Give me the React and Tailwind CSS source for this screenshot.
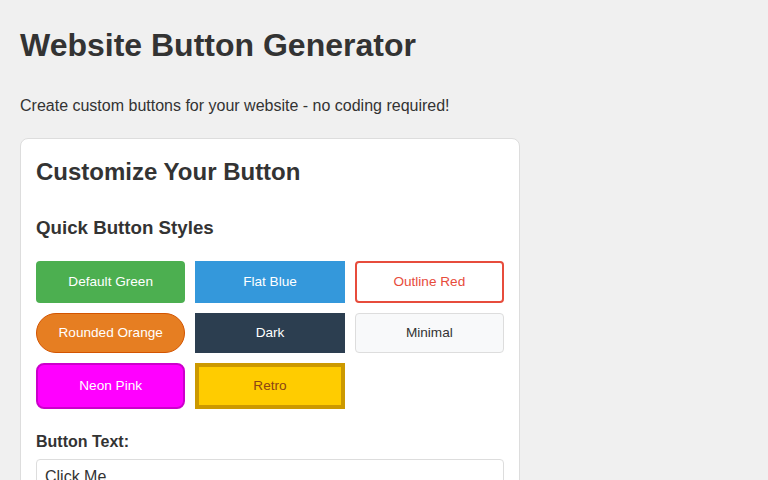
export default function App() {
  const styles = [
    { label: "Default Green", cls: "bg-[#4caf50] text-white rounded-[4px]" },
    { label: "Flat Blue", cls: "bg-[#3498db] text-white" },
    { label: "Outline Red", cls: "bg-white text-[#e74c3c] border-2 border-[#e74c3c] rounded-[4px]" },
    { label: "Rounded Orange", cls: "bg-[#e67e22] text-white border border-[#d35400] rounded-[20px]" },
    { label: "Dark", cls: "bg-[#2c3e50] text-white" },
    { label: "Minimal", cls: "bg-[#f8f9fa] text-[#333] border border-[#ddd] rounded-[4px]" },
    { label: "Neon Pink", cls: "bg-[#ff00ff] text-white border-2 border-[#cc00cc] rounded-[8px]" },
    { label: "Retro", cls: "bg-[#ffcc00] text-[#8b4513] border-4 border-[#cc9900]" },
  ];

  return (
    <div className="min-h-screen bg-[#f0f0f0] px-5 text-[#333] font-['Liberation_Sans',Arial,sans-serif]">
      <h1 className="pt-[27px] text-[32px] leading-[37px] font-bold">Website Button Generator</h1>
      <p className="mt-[33px] text-[16px] leading-[18px]">
        Create custom buttons for your website - no coding required!
      </p>

      <div className="mt-[23px] w-[500px] rounded-[8px] border border-[#ddd] bg-white px-[15px] pt-[19px] pb-5">
        <h2 className="text-[24px] leading-[28px] font-bold">Customize Your Button</h2>
        <h3 className="mt-[31px] text-[18.72px] leading-[22px] font-bold">Quick Button Styles</h3>

        <div className="mt-[22px] grid grid-cols-3 gap-[10px]">
          {styles.map((s) => (
            <button
              key={s.label}
              className={`flex items-center justify-center py-[11px] text-[13.6px] leading-[16px] ${s.cls}`}
            >
              {s.label}
            </button>
          ))}
        </div>

        <label className="mt-[24px] block text-[16px] leading-[18px] font-bold">Button Text:</label>
        <input
          readOnly
          value="Click Me"
          className="mt-[8px] block w-full rounded-[4px] border border-[#ddd] px-[8px] py-[8px] text-[16px] leading-[18px] text-[#333] outline-none"
        />
      </div>
    </div>
  );
}
